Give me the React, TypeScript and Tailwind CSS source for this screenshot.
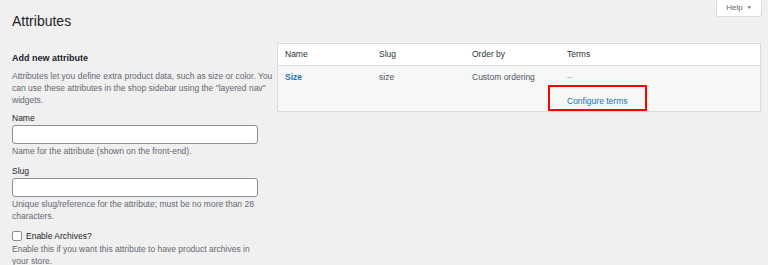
import React from "react";

const font = { fontFamily: '"Liberation Sans", Arial, sans-serif' };

function Field({ label, help, className }: { label: string; help: string; className: string }) {
  return (
    <div className={className}>
      <p className="text-[8.5px] leading-[12px] text-[#1d2327]">{label}</p>
      <div className="mt-[1px] h-[19px] w-[246px] rounded-[3px] border border-[#8c8f94] bg-white" />
      <p className="mt-[1px] text-[8.5px] leading-[12px] text-[#646970]">{help}</p>
    </div>
  );
}

export default function App() {
  return (
    <div className="relative h-[265px] w-[768px] overflow-hidden bg-[#f0f0f1]" style={font}>
      {/* screen meta tab */}
      <div className="absolute right-[6px] top-0 flex h-[17px] w-[46px] items-center justify-center gap-[4px] rounded-b-[3px] border border-t-0 border-[#dcdcde] bg-white text-[8px] text-[#646970]">
        <span>Help</span>
        <span className="text-[5px]">▼</span>
      </div>

      <h1 className="pl-[12px] pt-[12px] text-[14px] leading-[18px] text-[#1d2327]">Attributes</h1>

      <div className="flex gap-[3px] pl-[12px] pr-[7px] pt-[13px]">
        {/* left column */}
        <div className="w-[262px] shrink-0 pt-[9px]">
          <h2 className="text-[9px] font-bold leading-[12px] text-[#1d2327]">Add new attribute</h2>
          <p className="mt-[6px] text-[8.5px] leading-[12px] text-[#646970]">
            Attributes let you define extra product data, such as size or color. You can use these attributes in the shop sidebar using the "layered nav" widgets.
          </p>
          <Field className="mt-[6px]" label="Name" help="Name for the attribute (shown on the front-end)." />
          <Field className="mt-[8px]" label="Slug" help="Unique slug/reference for the attribute; must be no more than 28 characters." />
          <div className="mt-[8px] flex h-[12px] items-center gap-[4px]">
            <div className="h-[10px] w-[10px] rounded-[2px] border border-[#8c8f94] bg-white" />
            <span className="text-[8.5px] leading-[12px] text-[#1d2327]">Enable Archives?</span>
          </div>
          <p className="mt-[1px] pr-[10px] text-[8.5px] leading-[12px] text-[#646970]">
            Enable this if you want this attribute to have product archives in your store.
          </p>
        </div>

        {/* right column */}
        <div className="flex-1">
          <div className="border border-[#dcdcde] bg-white">
            <div className="grid h-[22px] grid-cols-[94px_93px_95px_1fr] items-center border-b border-[#dcdcde] pl-[7px] text-[8.5px] text-[#2c3338]">
              <span>Name</span>
              <span>Slug</span>
              <span>Order by</span>
              <span>Terms</span>
            </div>
            <div className="grid h-[45px] grid-cols-[94px_93px_95px_1fr] bg-[#f6f7f7] pl-[7px] pt-[5px] text-[8.5px] leading-[12px] text-[#50575e]">
              <span className="font-bold text-[#2271b1]">Size</span>
              <span>size</span>
              <span>Custom ordering</span>
              <div className="flex flex-col">
                <span className="text-[#a7aaad]">–</span>
                <div className="relative mt-[12px]">
                  <span className="text-[#2271b1]">Configure terms</span>
                  <div className="absolute left-[-19px] top-[-10px] h-[26px] w-[99px] border-2 border-[#ff0000]" />
                </div>
              </div>
            </div>
          </div>
        </div>
      </div>
    </div>
  );
}
